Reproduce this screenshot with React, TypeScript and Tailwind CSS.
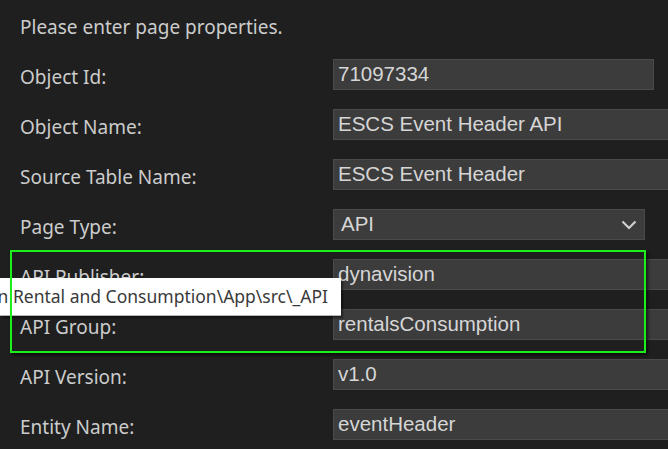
const labelFont = { fontFamily: '"Noto Sans", "Open Sans", sans-serif' }

type Field = {
  label: string
  value: string
  kind?: 'short' | 'select'
}

const fields: Field[] = [
  { label: 'Object Id:', value: '71097334', kind: 'short' },
  { label: 'Object Name:', value: 'ESCS Event Header API' },
  { label: 'Source Table Name:', value: 'ESCS Event Header' },
  { label: 'Page Type:', value: 'API', kind: 'select' },
  { label: 'API Publisher:', value: 'dynavision' },
  { label: 'API Group:', value: 'rentalsConsumption' },
  { label: 'API Version:', value: 'v1.0' },
  { label: 'Entity Name:', value: 'eventHeader' },
]

function FieldInput({ field }: { field: Field }) {
  if (field.kind === 'select') {
    return (
      <div className="flex h-[31px] w-[312px] shrink-0 items-center justify-between border border-[#4a4a4a] bg-[#3c3c3c] pl-[7px] pr-[7px] font-['Liberation_Sans',Arial,sans-serif] text-[20.5px] text-[#d6d6d6]">
        <span>{field.value}</span>
        <svg width="16" height="10" viewBox="0 0 16 10" className="text-[#cfcfcf]">
          <path d="M1.5 1.5 8 8l6.5-6.5" fill="none" stroke="currentColor" strokeWidth="2.2" />
        </svg>
      </div>
    )
  }
  return (
    <div
      className={`flex h-[31px] shrink-0 items-center border border-[#4a4a4a] bg-[#3c3c3c] pl-[4px] font-['Liberation_Sans',Arial,sans-serif] text-[20.5px] text-[#d6d6d6] ${
        field.kind === 'short' ? 'w-[321px]' : 'w-[360px]'
      }`}
    >
      {field.value}
    </div>
  )
}

export default function App() {
  return (
    <div className="relative h-[449px] w-[668px] overflow-hidden bg-[#1f1f1f]">
      <div className="flex flex-col pl-[20px]">
        <div className="flex h-[49.5px] items-center pt-[4px] text-[19px] text-[#cccccc]" style={labelFont}>
          Please enter page properties.
        </div>
        {fields.map(f => (
          <div key={f.label} className="flex h-[50px] items-center">
            <div className="w-[313px] shrink-0 pt-[6px] text-[19px] text-[#cccccc]" style={labelFont}>
              {f.label}
            </div>
            <FieldInput field={f} />
          </div>
        ))}
      </div>

      {/* path tooltip */}
      <div
        className="absolute left-0 top-[278px] flex h-[38px] w-[341px] items-center justify-end overflow-hidden whitespace-nowrap border-b border-[#b5b5b5] bg-white pr-[13px] text-[17.5px] text-[#3a3a3a] shadow-[2px_2px_2px_rgba(0,0,0,0.45)]"
        style={labelFont}
      >
        n Rental and Consumption\App\src\_API
      </div>

      {/* highlight box */}
      <div className="pointer-events-none absolute left-[10px] top-[250px] h-[103px] w-[636px] border-2 border-[#1cf01c] shadow-[2px_2px_3px_rgba(0,0,0,0.6)]" />
    </div>
  )
}
